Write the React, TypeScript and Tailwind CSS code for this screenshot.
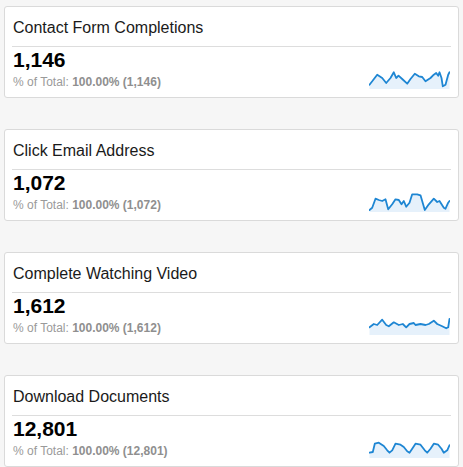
type Goal = {
  name: string;
  value: string;
  points: [number, number][];
};

const goals: Goal[] = [
  {
    name: "Contact Form Completions",
    value: "1,146",
    points: [
      [0, 14.7], [2.7, 11.3], [7.7, 4.7], [12.7, 8], [16.7, 13], [21, 8], [24.3, 2.3],
      [26.7, 8], [29, 5.7], [32.7, 9], [37.7, 13.7], [41, 9], [45.3, 3.7], [49.3, 6.3],
      [52.7, 7], [56, 11.3], [61, 8], [64.3, 4.7], [66.7, 3], [68.7, 5.7], [70, 2.3],
      [72, 8], [73.3, 16.3], [76, 14.7], [78.7, 4.7], [80, 2.3],
    ],
  },
  {
    name: "Click Email Address",
    value: "1,072",
    points: [
      [0, 17], [2.7, 14.7], [6, 5.7], [9.3, 7], [12.7, 8], [16, 6.3], [18.7, 16.3],
      [22.7, 11.3], [26, 6.3], [29.3, 7], [32, 11.3], [34.3, 8], [36.7, 13.7], [40, 9.7],
      [42.7, 1.3], [47.7, 1.3], [51, 2.3], [55.3, 17], [59.3, 11.3], [64.3, 5.7], [67.7, 9],
      [70, 8], [74.3, 14.7], [76, 15.7], [78.7, 9.7], [80, 8],
    ],
  },
  {
    name: "Complete Watching Video",
    value: "1,612",
    points: [
      [0, 11.3], [4.3, 8], [7.7, 9], [12.7, 3.7], [16.7, 9], [19.3, 10.3], [24.3, 6.3],
      [29.3, 9], [33.3, 8], [36.7, 11.3], [40, 8], [44.3, 7], [46, 9], [51, 8], [56, 9],
      [59.3, 8], [64.3, 4.7], [67.7, 8], [72.7, 10.3], [76.7, 12.3], [78.7, 11.3], [80, 3],
    ],
  },
  {
    name: "Download Documents",
    value: "12,801",
    points: [
      [0, 13.7], [3.3, 13], [5.3, 4.7], [9.3, 3.7], [14.3, 7], [17.7, 11.3], [20, 13.7],
      [22.7, 11.3], [26, 4.7], [31, 5.7], [34.3, 8], [37.7, 12.3], [40, 13.7], [42.7, 9.7],
      [46, 4.7], [51, 5.7], [55.3, 11.3], [57.7, 13.7], [61, 9.7], [64.3, 4.7], [68.7, 5.7],
      [72, 9.7], [74.3, 13.7], [77.7, 11.3], [80, 6.3],
    ],
  },
];

function Sparkline({ points }: { points: [number, number][] }) {
  const line = points.map(([x, y]) => `${x + 0.5},${y + 1}`).join(" ");
  const area = `0.5,20 ${line} 80.5,20`;
  return (
    <svg width="81" height="21" viewBox="0 0 81 21" className="block mb-[-1px]">
      <polygon points={area} fill="#e6f1fb" />
      <polyline
        points={line}
        fill="none"
        stroke="#1e86d3"
        strokeWidth="1.8"
        strokeLinejoin="round"
        strokeLinecap="round"
      />
    </svg>
  );
}

function GoalCard({ goal }: { goal: Goal }) {
  return (
    <div className="h-[92px] bg-white border border-[#dadada] rounded-[3px] px-[7px] pt-[11px]">
      <div className="text-[16px] leading-[20px] text-[#1a1a1a] pl-[1px] pb-[8px] border-b border-[#dddddd]">
        {goal.name}
      </div>
      <div className="flex items-end justify-between pr-[1px]">
        <div className="pl-[1px]">
          <div className="mt-[1px] text-[21px] leading-[24px] font-bold text-black">{goal.value}</div>
          <div className="mt-[3px] text-[12px] leading-[14px] text-[#9a9a9a]">
            % of Total: <span className="font-bold text-[#8f8f8f]">100.00% ({goal.value})</span>
          </div>
        </div>
        <Sparkline points={goal.points} />
      </div>
    </div>
  );
}

export default function App() {
  return (
    <div className="w-[463px] h-[467px] bg-[#f6f6f6] pt-[6px] px-[4px] flex flex-col gap-[31px] font-['Liberation_Sans',Arial,sans-serif] overflow-hidden">
      {goals.map((g) => (
        <GoalCard key={g.name} goal={g} />
      ))}
    </div>
  );
}
